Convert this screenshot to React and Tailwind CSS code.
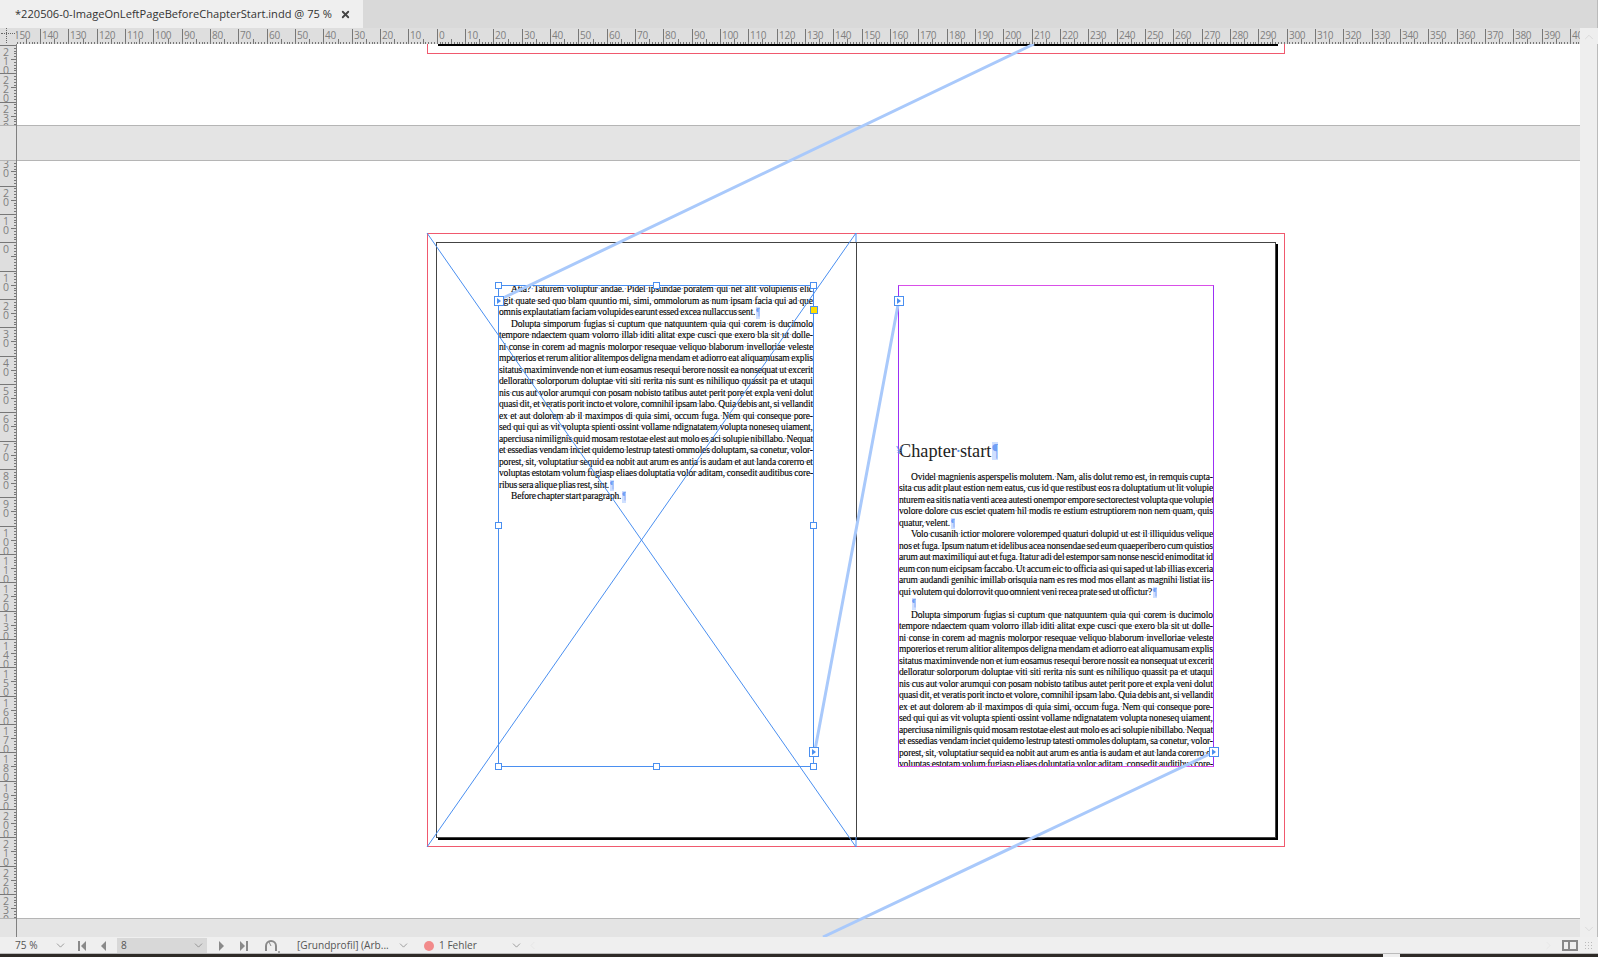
import { ChevronDown, ChevronUp, ChevronLeft, ChevronRight, X } from "lucide-react";

const LEFT_TOP = [
  ["Atia? Taturem voluptur andae. Pidel ipsundae poratem qui net alit volupienis elic", "i"],
  ["ugit quate sed quo blam quuntio mi, simi, ommolorum as num ipsam facia qui ad que"],
  ["omnis explautatiam faciam volupides earunt essed excea nullaccus sent.", "e"],
];

const DOLUPTA = [
  ["Dolupta simporum fugias si cuptum que natquuntem quia qui corem is ducimolo", "i"],
  ["tempore ndaectem quam volorro illab iditi alitat expe cusci que exero bla sit ut dolle-"],
  ["ni conse in corem ad magnis molorpor resequae veliquo blaborum invelloriae veleste"],
  ["mporerios et rerum alitior alitempos deligna mendam et adiorro eat aliquamusam explis"],
  ["sitatus maximinvende non et ium eosamus resequi berore nossit ea nonsequat ut excerit"],
  ["delloratur solorporum doluptae viti siti rerita nis sunt es nihiliquo quassit pa et utaqui"],
  ["nis cus aut volor arumqui con posam nobisto tatibus autet perit pore et expla veni dolut"],
  ["quasi dit, et veratis porit incto et volore, comnihil ipsam labo. Quia debis ant, si vellandit"],
  ["ex et aut dolorem ab il maximpos di quia simi, occum fuga. Nem qui conseque pore-"],
  ["sed qui qui as vit volupta spienti ossint vollame ndignatatem volupta noneseq uiament,"],
  ["aperciusa nimilignis quid mosam restotae elest aut molo es aci solupie nibillabo. Nequat"],
  ["et essedias vendam inciet quidemo lestrup tatesti ommoles doluptam, sa conetur, volor-"],
  ["porest, sit, voluptatiur sequid ea nobit aut arum es antia is audam et aut landa corerro et"],
  ["voluptas estotam volum fugiasp eliaes doluptatia volor aditam, consedit auditibus core-"],
];

const LEFT_END = [
  ["ribus sera alique plias rest, sint.", "e"],
  ["Before chapter start paragraph.", "ie"],
];

const RIGHT_TOP = [
  ["Ovidel magnienis asperspelis molutem. Nam, alis dolut remo est, in remquis cupta-", "i"],
  ["sita cus adit plaut estion nem eatus, cus id que restibust eos ra doluptatium ut lit volupie"],
  ["nturem ea sitis natia venti acea autesti onempor empore sectorectest volupta que volupiet"],
  ["volore dolore cus esciet quatem hil modis re estium estruptiorem non nem quam, quis"],
  ["quatur, velent.", "e"],
  ["Volo cusanih ictior molorere voloremped quaturi dolupid ut est il illiquidus velique", "i"],
  ["nos et fuga. Ipsum natum et idelibus acea nonsendae sed eum quaeperibero cum quistios"],
  ["arum aut maximiliqui aut et fuga. Itatur adi del estempor sam nonse nescid enimoditat id"],
  ["eum con num eicipsam faccabo. Ut accum eic to officia asi qui saped ut lab illias exceria"],
  ["arum audandi genihic imillab orisquia nam es res mod mos ellant as magnihi listiat iis-"],
  ["qui volutem qui dolorrovit quo omnient veni recea prate sed ut offictur?", "e"],
  ["", "ie"],
];

const Pilcrow = () => <span className="ml-px w-[4px] overflow-hidden bg-[#cfe0ff] text-[#6f9ff5]">¶</span>;

const Line = ({ text, flags = "" }) => {
  const indent = flags.includes("i");
  const end = flags.includes("e");
  const words = text ? text.split(" ") : [];
  return (
    <div
      className={`flex h-[11.5px] items-center overflow-hidden whitespace-nowrap leading-[11.5px] ${indent ? "pl-3" : ""} ${end ? "" : "justify-between"}`}
    >
      {words.map((w, i) => (
        <span key={i} className="contents">
          {i > 0 && <span className="flex w-[1.5px] shrink-0 justify-center text-[#5b95f2]">·</span>}
          <span className="shrink-0 tracking-[-0.17px] [-webkit-text-stroke:0.12px_#000]">{w}</span>
        </span>
      ))}
      {end && <Pilcrow />}
    </div>
  );
};

const Lines = ({ rows }) => rows.map(([t, f], i) => <Line key={i} text={t} flags={f} />);

const HRuler = () => {
  const ticks = [];
  for (let mm = -160; mm <= 410; mm++) {
    const x = Math.round(420.7 + mm * 2.833) + 0.5;
    const h = mm % 10 === 0 ? 15 : mm % 5 === 0 ? 5 : 2;
    ticks.push(`M${x} 16V${16 - h}`);
  }
  const labels = [];
  for (let mm = -150; mm <= 400; mm += 10) labels.push(mm);
  return (
    <svg width="1564" height="16" className="block">
      <path d={ticks.join("")} stroke="#777" strokeWidth="1" fill="none" />
      {labels.map((mm) => (
        <text key={mm} x={Math.round(420.7 + mm * 2.833) + 2} y="11" fontSize="10" letterSpacing="-0.3" fill="#808080">
          {Math.abs(mm)}
        </text>
      ))}
    </svg>
  );
};

const VRuler = ({ height, zero, from, to }) => {
  const ticks = [];
  const labels = [];
  for (let mm = from; mm <= to; mm++) {
    const y = Math.round(zero + mm * 2.833) + 0.5;
    const w = mm % 10 === 0 ? 16 : mm % 5 === 0 ? 5 : 2;
    ticks.push(`M16 ${y}H${16 - w}`);
    if (mm % 10 === 0) labels.push(mm);
  }
  return (
    <svg width="16" height={height} className="block">
      <path d={ticks.join("")} stroke="#777" strokeWidth="1" fill="none" />
      {labels.map((mm) => {
        const y = Math.round(zero + mm * 2.833);
        return String(Math.abs(mm))
          .split("")
          .map((d, i) => (
            <text key={`${mm}-${i}`} x="3" y={y + 11 + i * 9} fontSize="10.5" fill="#808080">
              {d}
            </text>
          ));
      })}
    </svg>
  );
};

const Handle = ({ className }) => (
  <div className={`absolute z-20 h-[7px] w-[7px] border border-[#4a8ff0] bg-white ${className}`} />
);

const Port = ({ className }) => (
  <div className={`absolute z-20 flex h-[10px] w-[10px] items-center justify-center border border-[#4a8ff0] bg-white ${className}`}>
    <div className="h-0 w-0 border-y-[3px] border-l-[4px] border-y-transparent border-l-[#4a8ff0]" />
  </div>
);

const Threads = () => (
  <svg width="1564" height="893" className="absolute left-0 top-0 z-10" fill="none">
    <path d="M411 189L840 803M840 189L411 803" stroke="#4a8ff0" strokeWidth="1" />
    <path d="M840 189V198M840 793V803" stroke="#4a8ff0" strokeWidth="1" />
    <path d="M487 254L1018 0M799 706L882 261M1198 708L807 893" stroke="#a9c9fb" strokeWidth="3" />
  </svg>
);

const PageNav = ({ flip, bar }) => (
  <svg width="9" height="10" viewBox="0 0 9 10" className={flip ? "-scale-x-100" : ""}>
    {bar && <rect x="0" y="0" width="2" height="10" fill="#8a8a8a" />}
    <path d="M8 0V10L3 5Z" fill="#8a8a8a" />
  </svg>
);

const Chev = () => <ChevronDown size={13} strokeWidth={1.25} className="text-[#777]" />;

export default function App() {
  return (
    <div className="flex h-[957px] w-[1598px] flex-col overflow-hidden bg-[#d9d9d9] font-['Open_Sans',sans-serif] text-[#333]">
      {/* document tab */}
      <div className="flex h-[28px] shrink-0 border-r border-[#bbb]">
        <div className="flex w-[363px] shrink-0 items-center bg-[#efefef] pl-[15px] text-[11.1px] text-[#333]">
          <span className="whitespace-nowrap">*220506-0-ImageOnLeftPageBeforeChapterStart.indd @ 75 %</span>
          <X size={11} strokeWidth={4} className="ml-[8px] shrink-0 text-[#444]" />
        </div>
      </div>

      {/* top ruler */}
      <div className="flex h-[16px] shrink-0">
        <div className="relative h-[16px] w-[16px] bg-[#dedede]">
          <div className="absolute left-[1px] top-[5px] w-[14px] border-t border-dotted border-[#666]" />
          <div className="absolute left-[6px] top-0 h-[15px] border-l border-dotted border-[#666]" />
        </div>
        <div className="w-[1564px] bg-[#dedede]">
          <HRuler />
        </div>
        <div className="flex flex-1 justify-center bg-[#eeeeee] pt-[2px]">
          <ChevronUp size={14} strokeWidth={1} className="text-[#ccc]" />
        </div>
      </div>

      {/* ruler, canvas, scrollbar */}
      <div className="flex h-[893px] shrink-0">
        <div className="relative z-30 flex w-[16px] flex-col bg-[#dedede] shadow-[1px_0_0_#808080]">
          <VRuler height={81} zero={-594} from={205} to={240} />
          <div className="h-[36px] border-y border-[#b5b5b5] bg-[#e4e4e4]" />
          <VRuler height={757} zero={81.3} from={-45} to={240} />
          <div className="h-[19px] border-t border-[#b5b5b5] bg-[#e4e4e4]" />
        </div>

        <div className="relative w-[1564px] overflow-hidden bg-white">
          <div className="flex h-full flex-col">
            <div className="h-[81px] bg-white" />
            <div className="h-[36px] border-y border-[#b5b5b5] bg-[#e4e4e4]" />
            <div className="h-[757px] bg-white" />
            <div className="h-[19px] border-t border-[#b5b5b5] bg-[#e4e4e4]" />
          </div>

          {/* previous spread */}
          <div className="absolute left-[411px] top-[-20px] h-[30px] w-[858px] border border-[#f0596e]" />
          <div className="absolute left-[422px] top-0 h-[2px] w-[840px] bg-black" />

          {/* this spread */}
          <div className="absolute left-[411px] top-[189px] h-[614px] w-[858px] border border-[#f0596e]" />
          <div className="absolute left-[420px] top-[198px] h-[596px] w-[840px] border border-[#444] shadow-[2px_2px_0_#000]">
            <div className="absolute inset-y-0 left-[419px] w-px bg-[#444]" />
          </div>

          {/* left text frame */}
          <div className="absolute left-[482px] top-[241px] h-[482px] w-[316px]">
            <div className="h-full overflow-hidden border border-[#4a8ff0] font-['Liberation_Serif',serif] text-[9.5px] text-black">
              <div className="-mt-[2px]">
                <Lines rows={LEFT_TOP} />
                <Lines rows={DOLUPTA} />
                <Lines rows={LEFT_END} />
              </div>
            </div>
            <Handle className="-left-[3px] -top-[3px]" />
            <Handle className="left-[155px] -top-[3px]" />
            <Handle className="left-[312px] -top-[3px]" />
            <Handle className="-left-[3px] top-[237px]" />
            <Handle className="left-[312px] top-[237px]" />
            <Handle className="-left-[3px] top-[478px]" />
            <Handle className="left-[155px] top-[478px]" />
            <Handle className="left-[312px] top-[478px]" />
            <Port className="-left-[4px] top-[11px]" />
            <Port className="left-[311px] top-[462px]" />
            <div className="absolute left-[312px] top-[21px] z-20 h-[8px] w-[8px] border border-[#4a8ff0] bg-[#ffdf00]" />
          </div>

          {/* right text frame */}
          <div className="absolute left-[882px] top-[241px] h-[482px] w-[316px]">
            <div className="h-full overflow-hidden border-x border-y border-x-[#9b30f5] border-y-[#d94fe8] font-['Liberation_Serif',serif] text-[9.5px] text-black">
              <div className="mb-[8.5px] mt-[153px] flex h-[24px] items-center whitespace-nowrap text-[18.3px] leading-none text-[#222]">
                Chapter<span className="flex w-[3px] justify-center text-[#5b95f2]">·</span>start
                <span className="ml-px w-[6px] overflow-hidden bg-[#cfe0ff] text-[#6f9ff5]">¶</span>
              </div>
              <Lines rows={RIGHT_TOP} />
              <Lines rows={DOLUPTA} />
            </div>
            <span className="absolute -left-[2px] top-[157px] z-20 text-[11px] leading-4 text-[#5b95f2]">¥</span>
            <Port className="-left-[4px] top-[11px]" />
            <Port className="left-[311px] top-[462px]" />
          </div>

          <Threads />
        </div>

        <div className="flex flex-1 flex-col items-center justify-end border-r border-[#bbb] bg-[#eeeeee] pb-[1px]">
          <ChevronDown size={14} strokeWidth={1} className="text-[#ccc]" />
        </div>
      </div>

      {/* status bar */}
      <div className="flex h-[16px] shrink-0 items-center bg-[#efefef] pt-px text-[10.1px] text-[#555]">
        <span className="ml-[15px] w-[38px] shrink-0">75 %</span>
        <div className="ml-[1px]"><Chev /></div>
        <div className="ml-[11px]"><PageNav bar /></div>
        <div className="ml-[11px]"><PageNav /></div>
        <div className="ml-[10px] flex h-[15px] w-[90px] shrink-0 items-center justify-between bg-[#d8d8d8] pl-[4px] pr-[2px]">
          <span>8</span>
          <Chev />
        </div>
        <div className="ml-[11px]"><PageNav flip /></div>
        <div className="ml-[12px]"><PageNav flip bar /></div>
        <svg width="16" height="14" viewBox="0 0 16 14" className="ml-[16px] shrink-0" fill="none">
          <path d="M2 12V7a5 5 0 0 1 10 0v5" stroke="#8a8a8a" strokeWidth="2" />
          <path d="M7 7L5 3" stroke="#8a8a8a" strokeWidth="1" />
          <rect x="14" y="12" width="2" height="2" fill="#aaa" />
        </svg>
        <span className="ml-[17px] w-[92px] shrink-0 whitespace-nowrap">[Grundprofil] (Arb...</span>
        <div className="ml-[8px]"><Chev /></div>
        <div className="ml-[14px] h-[10px] w-[10px] shrink-0 rounded-full bg-[#f28b8b]" />
        <span className="ml-[5px] w-[71px] shrink-0 whitespace-nowrap">1 Fehler</span>
        <div><Chev /></div>
        <ChevronLeft size={13} strokeWidth={1} className="ml-[3px] shrink-0 text-[#e0e0e0]" />
        <ChevronRight size={13} strokeWidth={1} className="ml-[1003px] shrink-0 text-[#e0e0e0]" />
        <div className="ml-[7px] flex h-[11px] w-[16px] shrink-0 border-2 border-[#888]">
          <div className="w-[6px] border-r-2 border-[#888]" />
        </div>
        <div className="ml-[6px] h-[10px] w-[10px] shrink-0 bg-[radial-gradient(#bbb_1px,transparent_1px)] bg-[length:3px_3px]" />
      </div>

      {/* window bottom */}
      <div className="flex h-[4px] shrink-0 border-t border-[#bbb] bg-[#2e2b27]">
        <div className="ml-[1383px] w-[17px] bg-[#eeeeee]" />
      </div>
    </div>
  );
}
